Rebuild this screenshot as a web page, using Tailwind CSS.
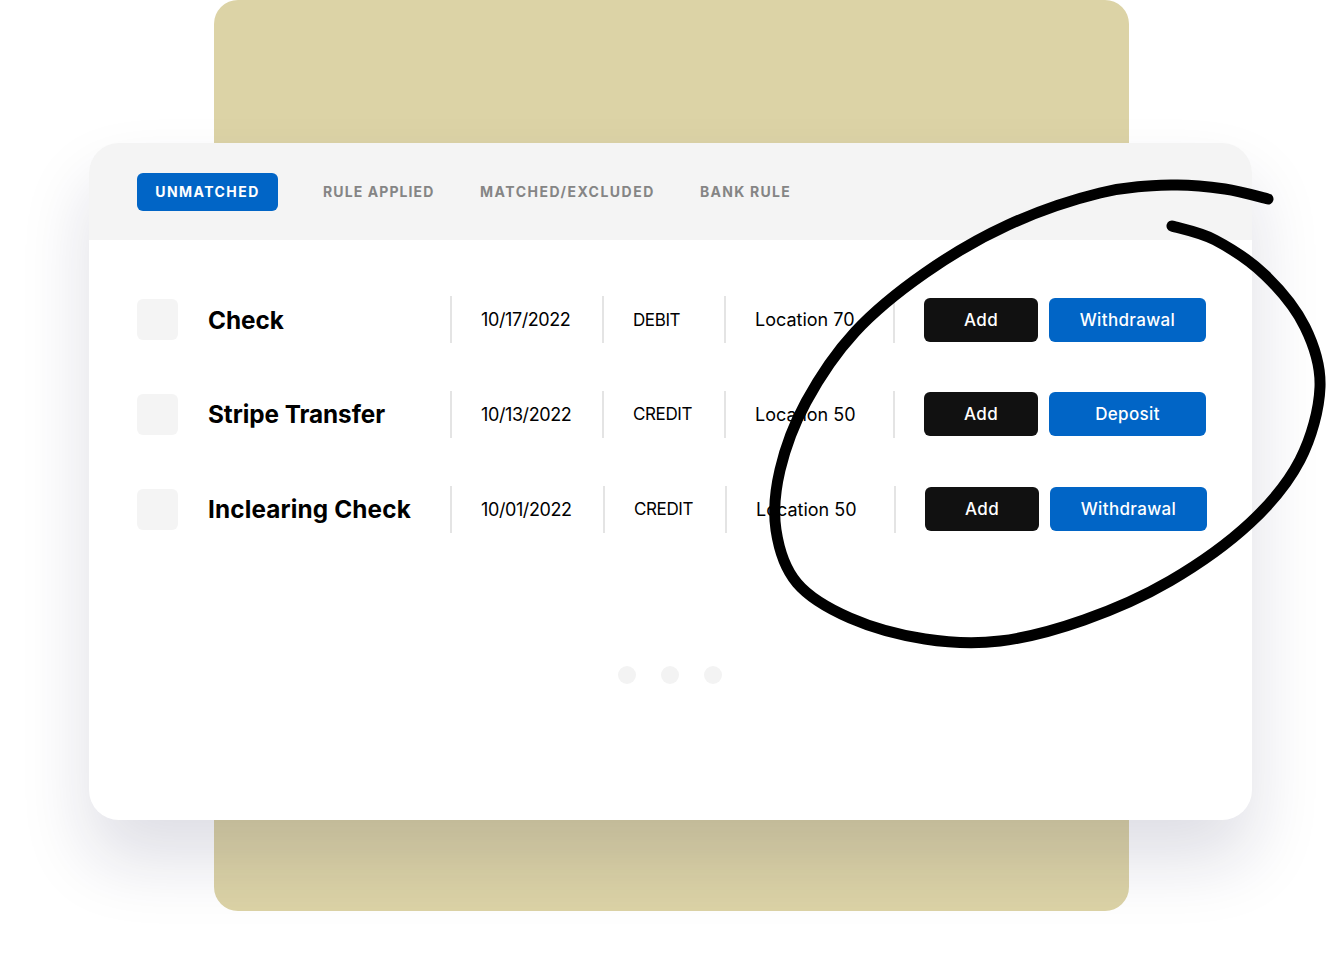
<!DOCTYPE html>
<html lang="en">
<head>
    <meta charset="UTF-8">
    <meta name="viewport" content="width=device-width, initial-scale=1.0">
    <title>Bank transactions</title>
    <script src="https://cdn.jsdelivr.net/npm/@tailwindcss/browser@4"></script>
</head>
<body class="bg-white overflow-hidden font-['Inter',sans-serif] text-black">
<div class="relative w-[1341px] h-[953px] overflow-hidden">

    <!-- tan panel behind the card -->
    <div class="absolute left-[214px] top-0 w-[915px] h-[911px] rounded-[24px] bg-[#dcd3a6]"></div>

    <!-- card -->
    <div class="absolute left-[89px] top-[143px] w-[1163px] h-[677px] rounded-[30px] bg-white shadow-[0_40px_70px_rgba(20,20,70,0.14)]">
        <div class="h-[97px] rounded-t-[30px] bg-[#f4f4f4] pl-[48px] flex items-center gap-[45px] text-[14px] font-bold text-[#858585] whitespace-nowrap">
            <span class="w-[141px] h-[38px] rounded-[6px] bg-[#0165c6] text-white tracking-[1.45px] flex items-center justify-center">UNMATCHED</span>
            <span class="w-[112px] tracking-[1.1px]">RULE APPLIED</span>
            <span class="w-[175px] tracking-[1.5px]">MATCHED/EXCLUDED</span>
            <span class="tracking-[1.25px]">BANK RULE</span>
        </div>

        <div class="pl-[48px] pt-[56.4px] flex flex-col gap-[47.6px]">
            <div class="flex items-center h-[47px]">
                <div class="w-[41px] h-[41px] rounded-[6px] bg-[#f4f4f4]"></div>
                <div class="ml-[30px] w-[242px] text-[24.3px] font-bold">Check</div>
                <div class="w-[152px] h-[47px] border-l-2 border-[#e4e4e4] pl-[29px] flex items-center text-[18px] tracking-[-0.4px]">10/17/2022</div>
                <div class="w-[122px] h-[47px] border-l-2 border-[#e4e4e4] pl-[29px] pt-[1px] flex items-center text-[17px] tracking-[-0.4px]">DEBIT</div>
                <div class="w-[169px] h-[47px] border-l-2 border-[#e4e4e4] pl-[29px] flex items-center text-[18px]">Location 70</div>
                <div class="h-[47px] border-l-2 border-[#e4e4e4] pl-[29px] flex items-center gap-[11px] text-[17px] font-medium tracking-[0.35px] text-white">
                    <span class="w-[114px] h-[44px] pt-[1px] rounded-[6px] bg-[#111111] flex items-center justify-center">Add</span>
                    <span class="w-[157px] h-[44px] pt-[1px] rounded-[6px] bg-[#0165c6] flex items-center justify-center">Withdrawal</span>
                </div>
            </div>
            <div class="flex items-center h-[47px]">
                <div class="w-[41px] h-[41px] rounded-[6px] bg-[#f4f4f4]"></div>
                <div class="ml-[30px] w-[242px] text-[24.3px] font-bold tracking-[-0.05px]">Stripe Transfer</div>
                <div class="w-[152px] h-[47px] border-l-2 border-[#e4e4e4] pl-[29px] flex items-center text-[18px] tracking-[-0.4px]">10/13/2022</div>
                <div class="w-[122px] h-[47px] border-l-2 border-[#e4e4e4] pl-[29px] pt-[1px] flex items-center text-[17px] tracking-[-0.4px]">CREDIT</div>
                <div class="w-[169px] h-[47px] border-l-2 border-[#e4e4e4] pl-[29px] flex items-center text-[18px]">Location 50</div>
                <div class="h-[47px] border-l-2 border-[#e4e4e4] pl-[29px] flex items-center gap-[11px] text-[17px] font-medium tracking-[0.35px] text-white">
                    <span class="w-[114px] h-[44px] pt-[1px] rounded-[6px] bg-[#111111] flex items-center justify-center">Add</span>
                    <span class="w-[157px] h-[44px] pt-[1px] rounded-[6px] bg-[#0165c6] flex items-center justify-center">Deposit</span>
                </div>
            </div>
            <div class="flex items-center h-[47px]">
                <div class="w-[41px] h-[41px] rounded-[6px] bg-[#f4f4f4]"></div>
                <div class="ml-[30px] w-[242px] text-[24.3px] font-bold tracking-[0.15px]">Inclearing Check</div>
                <div class="w-[153px] h-[47px] border-l-2 border-[#e4e4e4] pl-[29px] flex items-center text-[18px] tracking-[-0.4px]">10/01/2022</div>
                <div class="w-[122px] h-[47px] border-l-2 border-[#e4e4e4] pl-[29px] pt-[1px] flex items-center text-[17px] tracking-[-0.4px]">CREDIT</div>
                <div class="w-[169px] h-[47px] border-l-2 border-[#e4e4e4] pl-[29px] flex items-center text-[18px]">Location 50</div>
                <div class="h-[47px] border-l-2 border-[#e4e4e4] pl-[29px] flex items-center gap-[11px] text-[17px] font-medium tracking-[0.35px] text-white">
                    <span class="w-[114px] h-[44px] pt-[1px] rounded-[6px] bg-[#111111] flex items-center justify-center">Add</span>
                    <span class="w-[157px] h-[44px] pt-[1px] rounded-[6px] bg-[#0165c6] flex items-center justify-center">Withdrawal</span>
                </div>
            </div>
        </div>

        <!-- pager dots -->
        <div class="mt-[133.4px] flex justify-center gap-[25px] pr-[1px]">
            <span class="w-[18px] h-[18px] rounded-full bg-[#f3f3f3]"></span>
            <span class="w-[18px] h-[18px] rounded-full bg-[#f3f3f3]"></span>
            <span class="w-[18px] h-[18px] rounded-full bg-[#f3f3f3]"></span>
        </div>
    </div>

    <!-- hand drawn circle -->
    <svg class="absolute left-0 top-0 pointer-events-none" width="1341" height="953" viewBox="0 0 1341 953" fill="none">
        <path id="scribble" stroke="#000000" stroke-width="11" stroke-linecap="round" stroke-linejoin="round"></path>
    </svg>
</div>

<script>
    // smooth line through the points traced from the picture
    const pts = [[1268,199],[1225,189],[1172,185],[1100,193],[1008,225],[925,273],[855,332],[806,402],[780,470],[776,530],[797,583],[850,618],[925,639],[1000,641],[1084,620],[1170,581],[1250,523],[1300,460],[1320,387],[1305,327],[1265,275],[1215,240],[1172,226]];
    let d = `M${pts[0][0]} ${pts[0][1]}`;
    for (let i = 0; i < pts.length - 1; i++) {
        const p0 = pts[i - 1] || pts[i], p1 = pts[i], p2 = pts[i + 1], p3 = pts[i + 2] || p2;
        d += ` C${p1[0] + (p2[0] - p0[0]) / 6} ${p1[1] + (p2[1] - p0[1]) / 6} ${p2[0] - (p3[0] - p1[0]) / 6} ${p2[1] - (p3[1] - p1[1]) / 6} ${p2[0]} ${p2[1]}`;
    }
    document.getElementById("scribble").setAttribute("d", d);
</script>
</body>
</html>
